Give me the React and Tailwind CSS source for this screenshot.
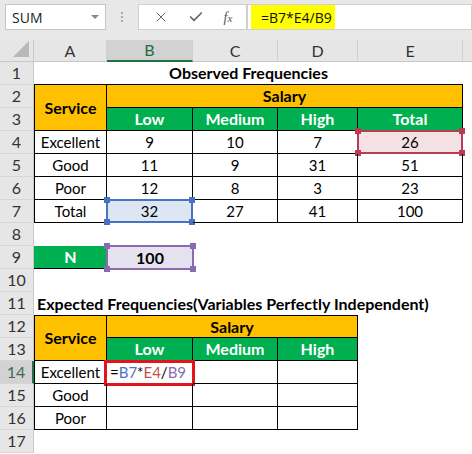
import React from "react";
import { X, Check } from "lucide-react";

const cols = ["A", "B", "C", "D", "E"];
const rows = Array.from({ length: 17 }, (_, i) => i + 1);

// small square drag handles for a selected range
const Handles = ({ color }) => (
  <>
    <span className={`absolute -left-[4px] -top-[4px] w-[6px] h-[6px] ${color}`} />
    <span className={`absolute -right-[4px] -top-[4px] w-[6px] h-[6px] ${color}`} />
    <span className={`absolute -left-[4px] -bottom-[4px] w-[6px] h-[6px] ${color}`} />
    <span className={`absolute -right-[4px] -bottom-[4px] w-[6px] h-[6px] ${color}`} />
  </>
);

const App = () => {
  return (
    <div
      className="w-[472px] h-[454px] overflow-hidden bg-white text-black"
      style={{ fontFamily: "Lato, 'Liberation Sans', sans-serif" }}
    >
      {/* Formula bar */}
      <div className="h-[40px] bg-[#e8e8e8] flex items-start pt-[4px] pl-[5px]">
        <div className="w-[101px] h-[26px] bg-white border border-[#c6c6c6] flex items-center justify-between pl-[6px] pr-[6px]">
          <span className="text-[14px] text-[#222]" style={{ fontFamily: "'Open Sans', sans-serif" }}>SUM</span>
          <span className="w-0 h-0 border-l-[4px] border-r-[4px] border-t-[4px] border-l-transparent border-r-transparent border-t-[#888]" />
        </div>
        <div className="w-[32px] h-[26px] flex flex-col items-center justify-center gap-[2px]">
          <span className="w-[2px] h-[2px] bg-[#aaa]" />
          <span className="w-[2px] h-[2px] bg-[#aaa]" />
          <span className="w-[2px] h-[2px] bg-[#aaa]" />
        </div>
        <div className="w-[109px] h-[26px] bg-white border border-[#d0d0d0] flex items-center justify-around px-[4px]">
          <X size={16} strokeWidth={1.5} className="text-[#666]" />
          <Check size={16} strokeWidth={2.5} className="text-[#666]" />
          <span className="text-[14px] italic text-[#555]" style={{ fontFamily: "'Liberation Serif', serif" }}>
            f<span className="text-[11px]">x</span>
          </span>
        </div>
        <div className="flex-1 h-[26px] bg-white border border-[#d0d0d0] flex items-stretch pl-[3px]">
          <div className="w-[84px] bg-[#ffff00] flex items-center pl-[10px] text-[14px] text-[#111]" style={{ fontFamily: "'Open Sans', sans-serif" }}>
            =B7*E4/B9
          </div>
        </div>
      </div>

      {/* Sheet */}
      <div className="grid grid-cols-[34px_73px_86px_85px_80px_105px_9px] grid-rows-[22px_repeat(17,23px)] text-[15px] leading-none">
        {/* corner */}
        <div className="bg-[#e6e6e6] border-r border-b border-[#c8c8c8] flex items-end justify-end p-[4px]">
          <svg width="16" height="16" viewBox="0 0 16 16">
            <polygon points="16,0 16,16 0,16" fill="#b9b9b9" />
          </svg>
        </div>
        {cols.map((c) => (
          <div
            key={c}
            className={`flex items-center justify-center text-[16px] border-r border-[#d0d0d0] ${
              c === "B"
                ? "bg-[#d2d2d2] text-[#1f6b41] border-b-2 border-b-[#217346]"
                : "bg-[#e6e6e6] text-[#333] border-b border-b-[#c8c8c8]"
            }`}
          >
            {c}
          </div>
        ))}
        <div className="bg-[#e6e6e6] border-b border-[#c8c8c8]" />

        {/* row headers */}
        {rows.map((r) => (
          <div
            key={r}
            style={{ gridRow: r + 1, gridColumn: 1 }}
            className={`flex items-center justify-center text-[16px] border-b border-[#d6d6d6] ${
              r === 14
                ? "bg-[#d2d2d2] text-[#3d6b50] border-r-2 border-r-[#217346]"
                : "bg-[#e6e6e6] text-[#333] border-r border-r-[#c8c8c8]"
            }`}
          >
            {r}
          </div>
        ))}

        {/* Row 1 title */}
        <div className="col-start-2 col-span-5 row-start-2 flex items-center justify-center font-bold text-[16px] border-b border-black">
          Observed Frequencies
        </div>

        {/* Observed table header */}
        <div className="col-start-2 row-start-3 row-span-2 bg-[#ffc000] font-bold text-[16px] flex items-center justify-center border-l border-r border-b border-black">
          Service
        </div>
        <div className="col-start-3 col-span-4 row-start-3 bg-[#ffc000] font-bold text-[16px] flex items-center justify-center border-r border-b border-black">
          Salary
        </div>
        {["Low", "Medium", "High", "Total"].map((h, i) => (
          <div
            key={h}
            style={{ gridRow: 4, gridColumn: i + 3 }}
            className="bg-[#00b050] text-white font-bold text-[16px] flex items-center justify-center border-r border-b border-black"
          >
            {h}
          </div>
        ))}

        {/* Observed data */}
        {[
          ["Excellent", "9", "10", "7", "26"],
          ["Good", "11", "9", "31", "51"],
          ["Poor", "12", "8", "3", "23"],
          ["Total", "32", "27", "41", "100"],
        ].map((row, ri) =>
          row.map((v, ci) => {
            const selB7 = ri === 3 && ci === 1;
            const selE4 = ri === 0 && ci === 4;
            return (
              <div
                key={`${ri}-${ci}`}
                style={{ gridRow: ri + 5, gridColumn: ci + 2 }}
                className={`relative flex items-center justify-center border-r border-b border-black ${
                  ci === 0 ? "border-l" : ""
                } ${selB7 ? "bg-[#dde7f3]" : selE4 ? "bg-[#f4e1e3]" : ""}`}
              >
                {v}
                {selB7 && (
                  <div className="absolute -inset-[1px] border-2 border-[#4a72c2]">
                    <Handles color="bg-[#4a72c2]" />
                  </div>
                )}
                {selE4 && (
                  <div className="absolute -inset-[1px] border-2 border-[#b83c55]">
                    <Handles color="bg-[#b83c55]" />
                  </div>
                )}
              </div>
            );
          })
        )}

        {/* Row 9: N */}
        <div className="col-start-2 row-start-10 bg-[#00b050] text-white font-bold text-[16px] flex items-center justify-center border-b border-black">
          N
        </div>
        <div className="col-start-3 row-start-10 relative bg-[#e6e1ee] font-bold text-[16px] flex items-center justify-center">
          100
          <div className="absolute -inset-[1px] border-2 border-[#8a6bb0]">
            <Handles color="bg-[#8a6bb0]" />
          </div>
        </div>

        {/* Row 11 title */}
        <div className="col-start-2 col-span-6 row-start-12 flex items-center pl-[3px] font-bold text-[16px] whitespace-nowrap">
          Expected Frequencies(Variables Perfectly Independent)
        </div>

        {/* Expected table header */}
        <div className="col-start-2 row-start-13 row-span-2 bg-[#ffc000] font-bold text-[16px] flex items-center justify-center border-l border-r border-t border-b border-black">
          Service
        </div>
        <div className="col-start-3 col-span-3 row-start-13 bg-[#ffc000] font-bold text-[16px] flex items-center justify-center border-r border-t border-b border-black">
          Salary
        </div>
        {["Low", "Medium", "High"].map((h, i) => (
          <div
            key={h}
            style={{ gridRow: 14, gridColumn: i + 3 }}
            className="bg-[#00b050] text-white font-bold text-[16px] flex items-center justify-center border-r border-b border-black"
          >
            {h}
          </div>
        ))}

        {/* Expected rows */}
        {["Excellent", "Good", "Poor"].map((label, ri) =>
          [label, "", "", ""].map((v, ci) => {
            const edit = ri === 0 && ci === 1;
            return (
              <div
                key={`e-${ri}-${ci}`}
                style={{ gridRow: ri + 15, gridColumn: ci + 2 }}
                className={`relative flex items-center border-r border-b border-black ${
                  ci === 0 ? "border-l justify-center" : "justify-start pl-[3px]"
                }`}
              >
                {edit ? (
                  <>
                    <span>=</span>
                    <span className="text-[#4a72c2]">B7</span>
                    <span>*</span>
                    <span className="text-[#c0504d]">E4</span>
                    <span>/</span>
                    <span className="text-[#8a6bb0]">B9</span>
                    <div className="absolute -left-[3px] -top-[1px] -right-[3px] -bottom-[3px] border-[3px] border-[#e0161b]" />
                  </>
                ) : (
                  v
                )}
              </div>
            );
          })
        )}
      </div>
    </div>
  );
};

export default App;
